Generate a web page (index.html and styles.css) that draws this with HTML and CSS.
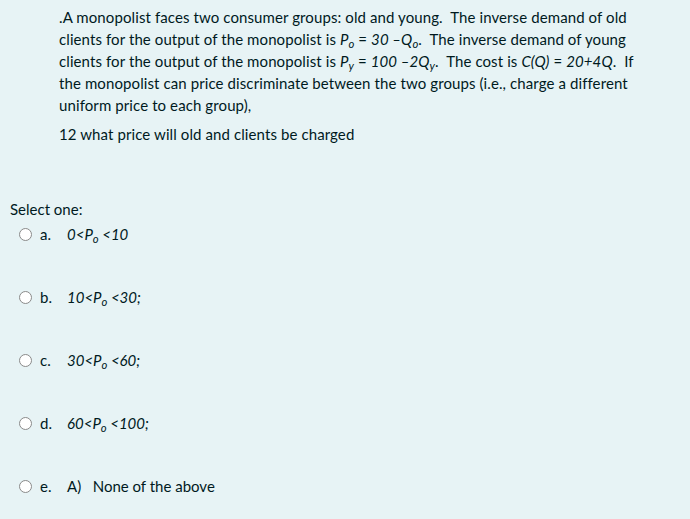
FILE: index.html
```html
<!DOCTYPE html>
<html>
<head>
<meta charset="utf-8">
<link rel="stylesheet" href="styles.css">
</head>
<body>
<div class="formulation">
  <div class="qtext">
    <p>.A monopolist faces two consumer groups: old and young.&nbsp; The inverse demand of old clients for the output of the monopolist is <i>P<sub>o</sub></i> = <i>30 –Q<sub>o</sub></i>.&nbsp; The inverse demand of young clients for the output of the monopolist is <i>P<sub>y</sub></i> = <i>100 –2Q<sub>y</sub></i>.&nbsp; The cost is <i>C(Q)</i> = <i>20+4Q</i>.&nbsp; If the monopolist can price discriminate between the two groups (i.e., charge a different uniform price to each group),</p>
    <p>12 what price will old and clients be charged</p>
  </div>
  <div class="ablock">
    <div class="prompt">Select one:</div>
    <div class="answer">
      <div class="opt"><span class="radio"></span><span class="letter">a.</span><span class="math">0&lt;P<sub>o</sub> &lt;10</span></div>
      <div class="opt"><span class="radio"></span><span class="letter">b.</span><span class="math">10&lt;P<sub>o</sub> &lt;30;</span></div>
      <div class="opt"><span class="radio"></span><span class="letter">c.</span><span class="math">30&lt;P<sub>o</sub> &lt;60;</span></div>
      <div class="opt"><span class="radio"></span><span class="letter">d.</span><span class="math">60&lt;P<sub>o</sub> &lt;100;</span></div>
      <div class="opt"><span class="radio"></span><span class="letter">e.</span><span class="plain">A)&nbsp;&nbsp; None of the above</span></div>
    </div>
  </div>
</div>
</body>
</html>
```

FILE: styles.css
```css
html, body {
  margin: 0;
  padding: 0;
  background: #e7f3f5;
}
body {
  font-family: Lato, "Liberation Sans", sans-serif;
  color: #001a1e;
  font-size: 15px;
  line-height: 22px;
}
.formulation {
  width: 690px;
  height: 519px;
  overflow: hidden;
}
.qtext {
  padding: 6px 0 0 59px;
  width: 582px;
  letter-spacing: 0.1px;
}
.qtext p {
  margin: 0 0 7px;
}
sub {
  font-size: 0.75em;
  line-height: 1;
  vertical-align: -0.25em;
}
.ablock {
  padding: 47px 0 0 10px;
}
.prompt {
  font-size: 15px;
  line-height: 20px;
}
.answer {
  padding: 4px 0 0 9px;
}
.opt {
  display: flex;
  align-items: center;
  height: 22px;
  margin-bottom: 41px;
}
.radio {
  width: 11px;
  height: 11px;
  border: 1px solid #8a8a8a;
  border-radius: 50%;
  background: #fff;
  margin-right: 8px;
  flex: none;
}
.letter {
  width: 27px;
  font-size: 15px;
}
.math {
  font-style: italic;
  font-size: 15px;
}
.plain {
  font-size: 15px;
}
```
